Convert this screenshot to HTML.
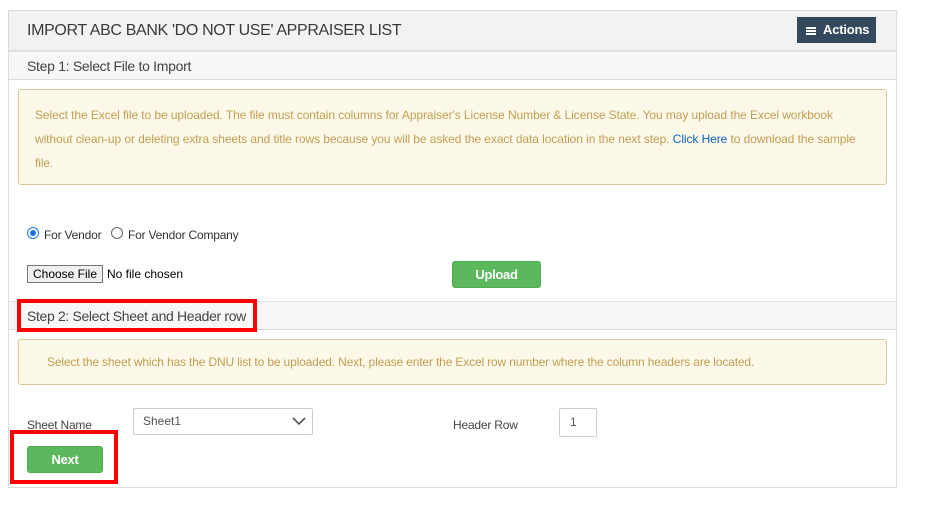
<!DOCTYPE html>
<html><head><style>
*{margin:0;padding:0;box-sizing:border-box}
body{width:925px;height:524px;background:#fff;font-family:"Liberation Sans",sans-serif;position:relative;overflow:hidden}
.a{position:absolute}
.box{left:8px;top:10px;width:889px;height:478px;border:1px solid #dcdcdc}
.hdr{left:9px;top:11px;width:887px;height:40px;background:#f2f2f2;border-bottom:1px solid #dcdcdc}
.bar{left:9px;width:887px;height:29px;background:#f7f7f7;border-bottom:1px solid #dcdcdc;border-top:1px solid #e2e2e2}
.alert{background:#fcf9e8;border:1px solid #d9c89a;border-radius:3px;color:#c29d55;font-size:12px}
.btn{background:#5cb85c;color:#fff;font-size:13px;font-weight:bold;border-radius:3px;text-align:center;border:1px solid #4cae4c;letter-spacing:-0.3px}
.red{border:4px solid #f00}
</style></head><body>
<div class="a box"></div>
<div class="a hdr"></div>
<div class="a" style="left:27px;top:22px;font-size:16px;color:#3a3a3a;letter-spacing:-0.35px">IMPORT ABC BANK 'DO NOT USE' APPRAISER LIST</div>
<div class="a" style="left:797px;top:17px;width:79px;height:26px;background:#34495e;color:#fff;font-size:13px;font-weight:bold;line-height:26px;padding-left:9px;letter-spacing:-0.2px">
<span style="display:inline-block;width:10px;height:8px;border-top:2px solid #fff;border-bottom:2px solid #fff;position:relative;margin-right:7px;vertical-align:middle"><span style="position:absolute;left:0;top:1px;width:10px;height:2px;background:#fff"></span></span>Actions</div>
<div class="a bar" style="top:51px"></div>
<div class="a" style="left:27px;top:58px;font-size:14px;color:#444;letter-spacing:-0.3px">Step 1: Select File to Import</div>
<div class="a alert" style="left:18px;top:89px;width:869px;height:96px;padding:13px 16px;line-height:24px;letter-spacing:-0.08px;white-space:nowrap">Select the Excel file to be uploaded. The file must contain columns for Appraiser's License Number &amp; License State. You may upload the Excel workbook<br>without clean-up or deleting extra sheets and title rows because you will be asked the exact data location in the next step. <span style="color:#0b63c4">Click Here</span> to download the sample<br>file.</div>
<div class="a" style="left:27px;top:227px;width:12px;height:12px;border-radius:50%;border:1px solid #1a73e8;background:#fff"><div style="position:absolute;left:2px;top:2px;width:6px;height:6px;border-radius:50%;background:#1a73e8"></div></div>
<div class="a" style="left:44px;top:228px;font-size:12px;color:#333;letter-spacing:-0.2px">For Vendor</div>
<div class="a" style="left:111px;top:227px;width:12px;height:12px;border-radius:50%;border:1px solid #666;background:#fff"></div>
<div class="a" style="left:128px;top:228px;font-size:12px;color:#333;letter-spacing:-0.2px">For Vendor Company</div>
<div class="a" style="left:27px;top:265px;width:76px;height:18px;border:1px solid #767676;background:#efefef;font-size:12px;line-height:16px;text-align:center;color:#000">Choose File</div>
<div class="a" style="left:107px;top:267px;font-size:12px;color:#000">No file chosen</div>
<div class="a btn" style="left:452px;top:261px;width:89px;height:27px;line-height:25px">Upload</div>
<div class="a bar" style="top:301px"></div>
<div class="a" style="left:27px;top:308px;font-size:14px;color:#444;letter-spacing:-0.35px">Step 2: Select Sheet and Header row</div>
<div class="a red" style="left:17px;top:299px;width:240px;height:33px"></div>
<div class="a alert" style="left:18px;top:339px;width:869px;height:46px;padding:0 28px;line-height:44px;letter-spacing:-0.15px">Select the sheet which has the DNU list to be uploaded. Next, please enter the Excel row number where the column headers are located.</div>
<div class="a" style="left:27px;top:418px;font-size:12px;color:#444;letter-spacing:-0.2px">Sheet Name</div>
<div class="a" style="left:133px;top:408px;width:180px;height:27px;border:1px solid #ccc;border-radius:2px;font-size:12px;color:#555;line-height:25px;padding-left:9px">Sheet1
<svg style="position:absolute;right:6px;top:8px" width="14" height="9" viewBox="0 0 14 9"><path d="M1 1l6 6 6-6" fill="none" stroke="#555" stroke-width="1.6"/></svg></div>
<div class="a" style="left:453px;top:418px;font-size:12px;color:#444;letter-spacing:-0.2px">Header Row</div>
<div class="a" style="left:559px;top:408px;width:38px;height:29px;border:1px solid #ccc;border-radius:2px;font-size:12px;color:#555;line-height:27px;padding-left:10px">1</div>
<div class="a btn" style="left:27px;top:446px;width:76px;height:27px;line-height:25px">Next</div>
<div class="a red" style="left:10px;top:430px;width:108px;height:54px"></div>
</body></html>
